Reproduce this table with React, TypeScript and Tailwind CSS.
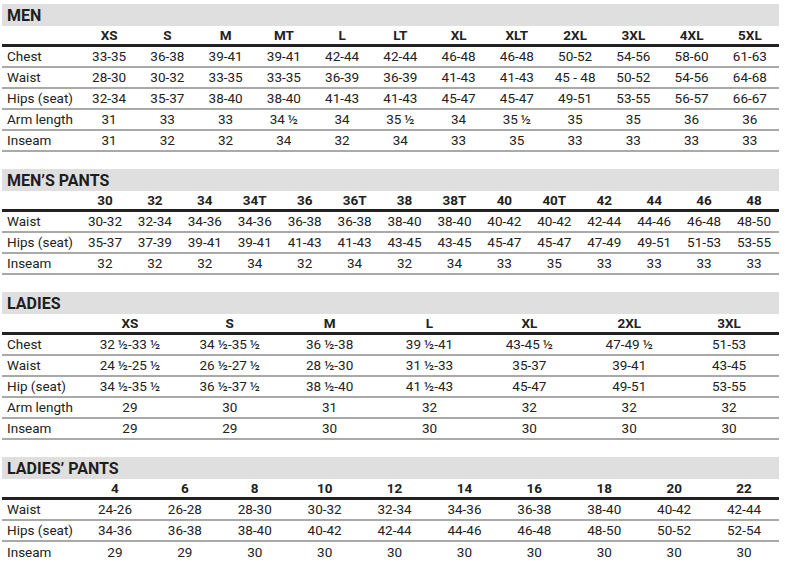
import React from "react";

type Row = { label: string; values: string[] };
type Section = {
  title: string;
  cols: string[];
  rows: Row[];
  grid: string;
  last?: boolean;
};

const H = "\u2009½";

const sections: Section[] = [
  {
    title: "MEN",
    grid: "grid-cols-[78px_repeat(12,minmax(0,1fr))]",
    cols: ["XS", "S", "M", "MT", "L", "LT", "XL", "XLT", "2XL", "3XL", "4XL", "5XL"],
    rows: [
      { label: "Chest", values: ["33-35", "36-38", "39-41", "39-41", "42-44", "42-44", "46-48", "46-48", "50-52", "54-56", "58-60", "61-63"] },
      { label: "Waist", values: ["28-30", "30-32", "33-35", "33-35", "36-39", "36-39", "41-43", "41-43", "45 - 48", "50-52", "54-56", "64-68"] },
      { label: "Hips (seat)", values: ["32-34", "35-37", "38-40", "38-40", "41-43", "41-43", "45-47", "45-47", "49-51", "53-55", "56-57", "66-67"] },
      { label: "Arm length", values: ["31", "33", "33", "34" + H, "34", "35" + H, "34", "35" + H, "35", "35", "36", "36"] },
      { label: "Inseam", values: ["31", "32", "32", "34", "32", "34", "33", "35", "33", "33", "33", "33"] },
    ],
  },
  {
    title: "MEN\u2019S PANTS",
    grid: "grid-cols-[78px_repeat(14,minmax(0,1fr))]",
    cols: ["30", "32", "34", "34T", "36", "36T", "38", "38T", "40", "40T", "42", "44", "46", "48"],
    rows: [
      { label: "Waist", values: ["30-32", "32-34", "34-36", "34-36", "36-38", "36-38", "38-40", "38-40", "40-42", "40-42", "42-44", "44-46", "46-48", "48-50"] },
      { label: "Hips (seat)", values: ["35-37", "37-39", "39-41", "39-41", "41-43", "41-43", "43-45", "43-45", "45-47", "45-47", "47-49", "49-51", "51-53", "53-55"] },
      { label: "Inseam", values: ["32", "32", "32", "34", "32", "34", "32", "34", "33", "35", "33", "33", "33", "33"] },
    ],
  },
  {
    title: "LADIES",
    grid: "grid-cols-[78px_repeat(7,minmax(0,1fr))]",
    cols: ["XS", "S", "M", "L", "XL", "2XL", "3XL"],
    rows: [
      { label: "Chest", values: ["32" + H + "-33" + H, "34" + H + "-35" + H, "36" + H + "-38", "39" + H + "-41", "43-45" + H, "47-49" + H, "51-53"] },
      { label: "Waist", values: ["24" + H + "-25" + H, "26" + H + "-27" + H, "28" + H + "-30", "31" + H + "-33", "35-37", "39-41", "43-45"] },
      { label: "Hip (seat)", values: ["34" + H + "-35" + H, "36" + H + "-37" + H, "38" + H + "-40", "41" + H + "-43", "45-47", "49-51", "53-55"] },
      { label: "Arm length", values: ["29", "30", "31", "32", "32", "32", "32"] },
      { label: "Inseam", values: ["29", "29", "30", "30", "30", "30", "30"] },
    ],
  },
  {
    title: "LADIES\u2019 PANTS",
    grid: "grid-cols-[78px_repeat(10,minmax(0,1fr))]",
    last: true,
    cols: ["4", "6", "8", "10", "12", "14", "16", "18", "20", "22"],
    rows: [
      { label: "Waist", values: ["24-26", "26-28", "28-30", "30-32", "32-34", "34-36", "36-38", "38-40", "40-42", "42-44"] },
      { label: "Hips (seat)", values: ["34-36", "36-38", "38-40", "40-42", "42-44", "44-46", "46-48", "48-50", "50-52", "52-54"] },
      { label: "Inseam", values: ["29", "29", "30", "30", "30", "30", "30", "30", "30", "30"] },
    ],
  },
];

function SizeSection({ s }: { s: Section }) {
  return (
    <div className="flex flex-col">
      <div className="h-[22px] bg-[#dfdfdf] flex items-center pl-[5px] pt-[1px] text-[16px] font-bold text-[#1e1e1e] leading-none">
        {s.title}
      </div>
      <div className={`grid ${s.grid} h-[21px] pt-[2px] border-b-[3px] border-[#222222] items-center text-[13.5px] font-bold leading-none`}>
        <div />
        {s.cols.map((c, i) => (
          <div key={i} className="text-center">
            {c}
          </div>
        ))}
      </div>
      {s.rows.map((r, ri) => {
        const isLast = ri === s.rows.length - 1;
        const border = s.last && isLast ? "" : "border-b-2 border-[#a9a9a9]";
        return (
          <div key={ri} className={`grid ${s.grid} h-[21px] pt-[1px] items-center text-[13.5px] leading-none ${border}`}>
            <div className="pl-[5px] whitespace-nowrap">{r.label}</div>
            {r.values.map((v, vi) => (
              <div key={vi} className="text-center whitespace-nowrap">
                {v}
              </div>
            ))}
          </div>
        );
      })}
    </div>
  );
}

export default function App() {
  return (
    <div className="w-[794px] h-[571px] overflow-hidden bg-white font-['Roboto','Liberation_Sans',sans-serif] text-[#222222]">
      <div className="pt-[4px] pl-[2px] w-[779px] flex flex-col gap-[17px]">
        {sections.map((s, i) => (
          <SizeSection key={i} s={s} />
        ))}
      </div>
    </div>
  );
}
